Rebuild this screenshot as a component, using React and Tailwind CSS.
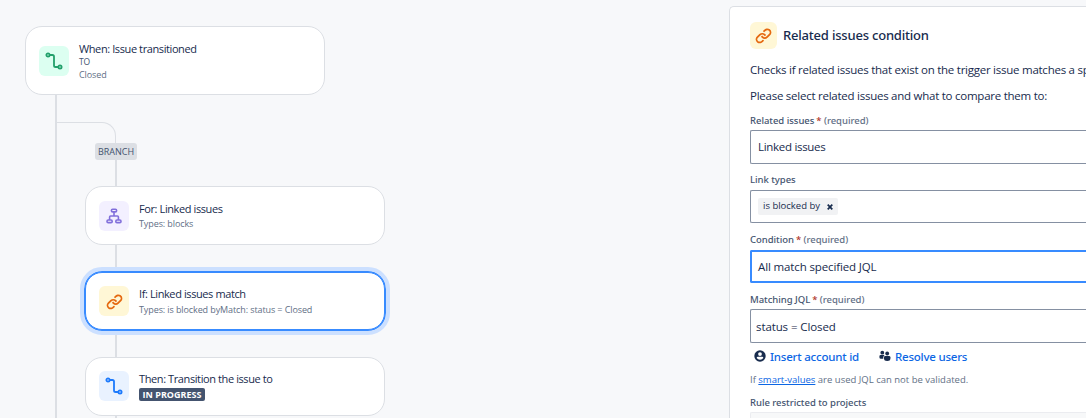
import clsx from 'clsx';

const TONES = {
  green: 'bg-[#dcfff1] text-[#22a06b]',
  purple: 'bg-[#f3f0ff] text-[#8270db]',
  yellow: 'bg-[#fff7d6] text-[#e56910]',
  blue: 'bg-[#e9f2ff] text-[#1d7afc]',
};

function TransitionIcon() {
  return (
    <svg width="18" height="18" viewBox="0 0 18 18" fill="none" stroke="currentColor" strokeWidth="1.8">
      <circle cx="3" cy="3" r="1.6" />
      <circle cx="15" cy="15" r="1.6" />
      <path d="M4.8 3H7.4Q9 3 9 4.6V13.4Q9 15 10.6 15H13.2" />
    </svg>
  );
}

function TreeIcon() {
  return (
    <svg width="16" height="16" viewBox="0 0 16 16" fill="none" stroke="currentColor" strokeWidth="1.6">
      <rect x="5.4" y="1.3" width="5.2" height="2.6" rx="1.2" />
      <rect x="1" y="12" width="5.2" height="2.6" rx="1.2" />
      <rect x="9.8" y="12" width="5.2" height="2.6" rx="1.2" />
      <path d="M8 4V8M3.6 12V9Q3.6 8 4.6 8H11.4Q12.4 8 12.4 9V12" />
    </svg>
  );
}

function LinkIcon() {
  return (
    <svg width="21" height="21" viewBox="0 0 24 24" fill="currentColor">
      <path d="M12.856 5.457l-.937.92a1.002 1.002 0 0 0 0 1.437 1.047 1.047 0 0 0 1.463 0l.984-.966c.967-.95 2.542-1.135 3.602-.288a2.54 2.54 0 0 1 .203 3.81l-2.903 2.852a2.646 2.646 0 0 1-3.696 0l-1.11-1.09L9 13.57l1.108 1.089c1.822 1.788 4.802 1.788 6.622 0l2.905-2.852a4.558 4.558 0 0 0-.357-6.82c-1.893-1.517-4.695-1.226-6.422.47" />
      <path d="M11.144 19.543l.937-.92a1.002 1.002 0 0 0 0-1.437 1.047 1.047 0 0 0-1.462 0l-.985.966c-.967.95-2.542 1.135-3.602.288a2.54 2.54 0 0 1-.203-3.81l2.903-2.852a2.646 2.646 0 0 1 3.696 0l1.11 1.09L15 11.43l-1.108-1.089c-1.822-1.788-4.802-1.788-6.622 0l-2.905 2.852a4.558 4.558 0 0 0 .357 6.82c1.893 1.517 4.695 1.226 6.422-.47" />
    </svg>
  );
}

function PersonIcon() {
  return (
    <svg width="12" height="12" viewBox="0 0 12 12" className="-mt-[2px]">
      <circle cx="6" cy="6" r="5.7" fill="#172b4d" />
      <circle cx="6" cy="4.1" r="1.9" fill="#fff" />
      <path d="M2.7 7.9Q2.7 6.8 3.8 6.8H8.2Q9.3 6.8 9.3 7.9Q8.2 9.7 6 9.7T2.7 7.9Z" fill="#fff" />
    </svg>
  );
}

function PeopleIcon() {
  return (
    <svg width="12" height="12" viewBox="0 0 12 12" fill="#172b4d" className="-mt-[2px]">
      <circle cx="3.3" cy="2.7" r="1.9" />
      <circle cx="8.2" cy="3.5" r="1.9" />
      <path d="M.4 6.4Q.4 5.1 1.7 5.1H4.6Q5.3 5.1 5.5 5.6Q4.3 6 4.3 7.4V8.7H2Q.4 8.7.4 7.2Z" />
      <path d="M5 7.3Q5 6 6.3 6H10Q11.4 6 11.4 7.3V8.4Q11.4 10.9 8.2 10.9T5 8.4Z" />
    </svg>
  );
}

function IconTile({ tone, small, children }) {
  return (
    <div className={clsx('flex shrink-0 items-center justify-center rounded-[6px]', small ? 'size-[27px]' : 'size-[30px]', TONES[tone])}>
      {children}
    </div>
  );
}

function RuleCard({ tone, icon, title, selected, className, children }) {
  return (
    <div
      className={clsx(
        'flex w-[300px] shrink-0 items-center rounded-[17px] border bg-white pl-[13px]',
        selected ? 'relative z-10 border-[#388bff] ring-1 ring-[#388bff] outline-4 outline-offset-1 outline-[#cce0ff]' : 'border-[#dcdfe4]',
        className
      )}
    >
      <IconTile tone={tone}>{icon}</IconTile>
      <div className="ml-[10px] text-[9px] leading-[13px] tracking-[-0.1px] text-[#626f86]">
        <p className="pb-px text-[11px] leading-[15px] tracking-[-0.4px] text-[#172b4d]">{title}</p>
        {children}
      </div>
    </div>
  );
}

function Connector({ className }) {
  return <div className={clsx('ml-[30px] w-[2px] shrink-0 bg-[#dcdfe4]', className)} />;
}

function Label({ children, required, className }) {
  return (
    <p className={clsx("h-[14px] font-['Noto_Sans',sans-serif] text-[9.5px] leading-[14px] font-medium tracking-[-0.03px] text-[#44546f]", className)}>
      {children}
      {required && <><span className="ml-[2px] text-[#ae2e24]">*</span> <span className="text-[#626f86]">(required)</span></>}
    </p>
  );
}

function Field({ focused, className, children }) {
  return (
    <div
      className={clsx(
        'flex items-center rounded-l-[2px] border-r-0 bg-white text-[11.5px]',
        focused ? 'border-2 border-[#388bff] pl-[6px]' : 'border border-[#8590a2] pl-[7px]',
        className
      )}
    >
      {children}
    </div>
  );
}

export default function App() {
  return (
    <div className="flex h-[418px] w-[1086px] overflow-hidden bg-[#f7f8fa] font-['Open_Sans','Noto_Sans',sans-serif] text-[#172b4d]">
      {/* Rule chain */}
      <div className="flex w-[729px] shrink-0 flex-col pt-[26px] pl-[25px]">
        <RuleCard tone="green" icon={<TransitionIcon />} title="When: Issue transitioned" className="h-[69px]">
          <p className="text-[8.5px] leading-[10px] text-[#44546f]">TO</p>
          <p className="pt-px">Closed</p>
        </RuleCard>

        <div className="ml-[30px] flex h-[323px] border-l-2 border-[#dcdfe4] pt-[27px]">
          <div className="flex flex-col">
            <div className="h-[21px] w-[59px] shrink-0 rounded-tr-[14px] border-t border-r border-[#dcdfe4]" />
            <div className="ml-[38px] h-[17px] w-[42px] shrink-0 rounded-[3px] bg-[#dcdfe4] text-center text-[9px] leading-[17px] text-[#44546f]">BRANCH</div>
            <div className="ml-[28px] flex flex-col">
              <Connector className="h-[26px]" />
              <RuleCard tone="purple" icon={<TreeIcon />} title="For: Linked issues" className="h-[59px]">
                <p>Types: blocks</p>
              </RuleCard>
              <Connector className="h-[27px]" />
              <RuleCard tone="yellow" icon={<LinkIcon />} title="If: Linked issues match" selected className="h-[58px]">
                <p className="pt-px">Types: is blocked byMatch: status = Closed</p>
              </RuleCard>
              <Connector className="h-[27px]" />
              <RuleCard tone="blue" icon={<TransitionIcon />} title="Then: Transition the issue to" className="h-[59px] pb-px">
                <p className="mt-px h-[13px] w-[66px] rounded-[2px] bg-[#44546f] text-center font-bold tracking-normal text-white">IN PROGRESS</p>
              </RuleCard>
              <Connector className="h-[4px]" />
            </div>
          </div>
        </div>
      </div>

      {/* Condition settings */}
      <div className="mt-[6px] flex-1 overflow-hidden rounded-tl-[5px] border-t border-l border-[#dcdfe4] bg-white pt-[15px] pl-[20px] whitespace-nowrap">
        <div className="flex items-center gap-[6px]">
          <IconTile tone="yellow" small><LinkIcon /></IconTile>
          <h1 className="-mt-[2px] font-['Noto_Sans',sans-serif] text-[13px] leading-[20px] font-medium tracking-[-0.2px]">Related issues condition</h1>
        </div>

        <p className="mt-[12px] text-[11.5px] leading-[18px] tracking-[-0.25px]">Checks if related issues that exist on the trigger issue matches a sp</p>
        <p className="mt-[8px] text-[11.5px] leading-[18px] tracking-[-0.25px]">Please select related issues and what to compare them to:</p>

        <Label required className="mt-[9px]">Related issues</Label>
        <Field className="mt-[2px] h-[34px] tracking-[-0.3px]">Linked issues</Field>

        <Label className="mt-[9px]">Link types</Label>
        <Field className="mt-[3px] h-[33px]">
          <span className="flex h-[17px] w-[80px] items-center justify-between rounded-[2px] bg-[#f1f2f4] px-[5px] text-[9.5px]">
            is blocked by
            <svg width="6" height="6" viewBox="0 0 6 6" stroke="#172b4d" strokeWidth="1.7"><path d="M.7 .7L5.3 5.3M5.3 .7L.7 5.3" /></svg>
          </span>
        </Field>

        <Label required className="mt-[10px]">Condition</Label>
        <Field focused className="mt-[3px] h-[33px] tracking-[-0.13px]">All match specified JQL</Field>

        <Label required className="mt-[10px]">Matching JQL</Label>
        <Field className="mt-[2px] h-[34px] tracking-[-0.1px]"><span className="-ml-[2px] pt-px">status = Closed</span></Field>

        <div className="mt-[5px] flex h-[18px] items-center pl-[4px] font-['Noto_Sans',sans-serif] text-[11.5px] font-medium tracking-[-0.22px] text-[#0c66e4]">
          <PersonIcon />
          <span className="ml-[4px] w-[109px]">Insert account id</span>
          <PeopleIcon />
          <span className="ml-[4px]">Resolve users</span>
        </div>

        <p className="mt-[7px] text-[9.5px] leading-[14px] text-[#626f86]">
          If <a href="#" className="text-[#0c66e4] underline">smart-values</a> are used JQL can not be validated.
        </p>

        <Label className="mt-[9px]">Rule restricted to projects</Label>
        <div className="mt-[2px] h-[20px] rounded-tl-[2px] border-t border-l border-[#ebecf0] bg-[#f7f8f9]" />
      </div>
    </div>
  );
}
